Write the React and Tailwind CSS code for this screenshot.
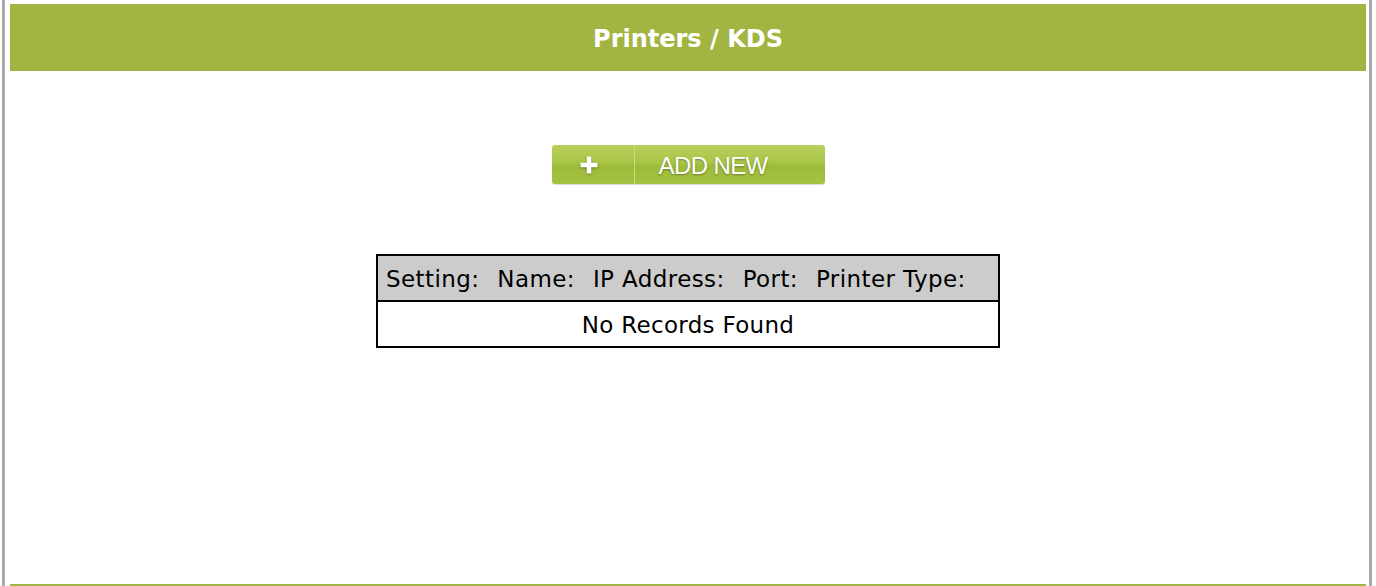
import React from "react";

const columns = ["Setting:", "Name:", "IP Address:", "Port:", "Printer Type:"];

function AddNewButton() {
  return (
    <button
      type="button"
      className="flex h-[39px] w-[273px] items-stretch overflow-hidden rounded-[3px] bg-[linear-gradient(to_bottom,#b9d05e_0%,#a9c546_45%,#9dba38_55%,#a6c244_100%)] text-white shadow-[0_1px_1px_rgba(0,0,0,0.15)]"
    >
      <span className="flex w-[83px] items-center justify-start border-r border-[#cadd86] pl-[27px]">
        <svg width="20" height="20" viewBox="0 0 20 20" className="drop-shadow-[0_1px_1px_rgba(0,0,0,0.35)]">
          <path d="M10 1.5v17M1.5 10h17" stroke="#fff" strokeWidth="4.5" />
        </svg>
      </span>
      <span className="flex flex-1 items-center justify-start pl-[24px] pt-[3px] font-['Liberation_Sans',Arial,sans-serif] text-[24px] tracking-[-0.6px] [text-shadow:0_1px_2px_rgba(0,0,0,0.35)]">
        ADD NEW
      </span>
    </button>
  );
}

export default function App() {
  return (
    <div className="ml-[2px] mr-[4px] flex h-[586px] flex-col border-x-[3px] border-[#aaaaaa] bg-white pl-[5px] pr-[3px] pt-[4px] font-['DejaVu_Sans',Verdana,sans-serif]">
      <div className="flex flex-1 flex-col border-b-2 border-[#a2b543]">
        <div className="flex h-[67px] items-center justify-center bg-[#a2b543] pt-[2px]">
          <h1 className="text-[24px] font-bold text-white">Printers / KDS</h1>
        </div>

        <div className="mt-[74px] flex justify-center">
          <AddNewButton />
        </div>

        <div className="mt-[70px] flex justify-center">
          <table className="w-[624px] border-collapse border-2 border-black text-[23px] text-black">
            <thead>
              <tr className="h-[46px] bg-[#cccccc]">
                <th className="border-b-2 border-black px-[8px] pt-[3px] text-left font-normal">
                  <div className="flex gap-[18px] tracking-[0.4px]">
                    {columns.map((c) => (
                      <span key={c}>{c}</span>
                    ))}
                  </div>
                </th>
              </tr>
            </thead>
            <tbody>
              <tr className="h-[46px]">
                <td className="pt-[3px] text-center tracking-[0.3px]">No Records Found</td>
              </tr>
            </tbody>
          </table>
        </div>
      </div>
    </div>
  );
}
